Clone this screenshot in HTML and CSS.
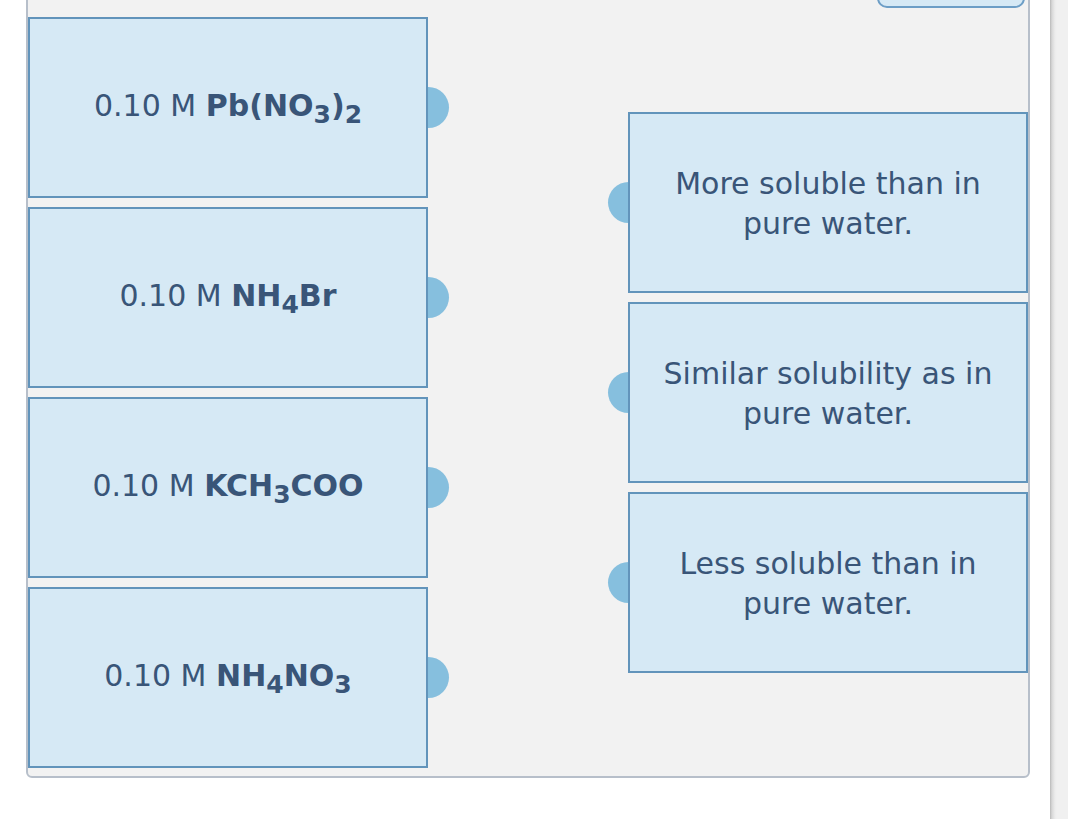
FILE: index.html
```html
<!DOCTYPE html>
<html lang="en">
<head>
<meta charset="utf-8">
<title>Solubility matching</title>
<link rel="stylesheet" href="styles.css">
</head>
<body>
<div class="page">
  <main class="main">
    <section class="panel">
      <div class="toolbar">
        <div class="tool-button"></div>
      </div>
      <div class="board">
        <div class="column column-left">
          <div class="card card-source"><p>0.10 M <b>Pb(NO<sub>3</sub>)<sub>2</sub></b></p></div>
          <div class="card card-source"><p>0.10 M <b>NH<sub>4</sub>Br</b></p></div>
          <div class="card card-source"><p>0.10 M <b>KCH<sub>3</sub>COO</b></p></div>
          <div class="card card-source"><p>0.10 M <b>NH<sub>4</sub>NO<sub>3</sub></b></p></div>
        </div>
        <div class="column column-right">
          <div class="card card-target"><p>More soluble than in pure water.</p></div>
          <div class="card card-target"><p>Similar solubility as in pure water.</p></div>
          <div class="card card-target"><p>Less soluble than in pure water.</p></div>
        </div>
      </div>
    </section>
  </main>
  <aside class="side-strip"></aside>
</div>
</body>
</html>
```

FILE: styles.css
```css
html, body {
  margin: 0;
  padding: 0;
  background: #ffffff;
  overflow: hidden;
}

.page {
  display: flex;
  width: 1068px;
  height: 819px;
}

.main {
  width: 1050px;
  flex: none;
}

.side-strip {
  flex: 1;
  height: 819px;
  background: linear-gradient(to right, #b9b9b9 0px, #d8d8d8 2px, #ececec 5px, #f0f0f0 7px, #f0f0f0 100%);
}

.panel {
  position: relative;
  z-index: 0;
  width: 1000px;
  margin: -40px 0 0 26px;
  padding: 0 0 8px 0;
  background: #f2f2f2;
  border: 2px solid #b7bfca;
  border-radius: 0 0 6px 6px;
}

.toolbar {
  display: flex;
  justify-content: flex-end;
  height: 55px;
}

.tool-button {
  width: 144px;
  height: 40px;
  margin: 2px 3px 0 0;
  background: #d6e9f5;
  border: 2px solid #6d9ec6;
  border-radius: 0 0 10px 10px;
}

.board {
  display: flex;
  justify-content: space-between;
}

.column {
  display: flex;
  flex-direction: column;
  gap: 9px;
  width: 400px;
}

.column-right {
  padding-top: 95px;
}

.card {
  position: relative;
  box-sizing: border-box;
  height: 181px;
  display: flex;
  align-items: center;
  justify-content: center;
  background: #d6e9f5;
  border: 2px solid #6294bb;
  font-family: "DejaVu Sans", Verdana, sans-serif;
  font-size: 30px;
  line-height: 40px;
  color: #395578;
  text-align: center;
}

.card-source {
  padding: 0 24px 3px;
}

.card-target {
  padding: 3px 24px 0;
}

.card p {
  margin: 0;
}

.card b {
  font-weight: bold;
}

.card sub {
  line-height: 0;
}

.card::after {
  content: "";
  position: absolute;
  z-index: -1;
  top: 50%;
  width: 41px;
  height: 41px;
  margin-top: -20.5px;
  border-radius: 50%;
  background: #86bfde;
}

.card-source::after {
  right: -22.5px;
}

.card-target::after {
  left: -22.5px;
}
```
